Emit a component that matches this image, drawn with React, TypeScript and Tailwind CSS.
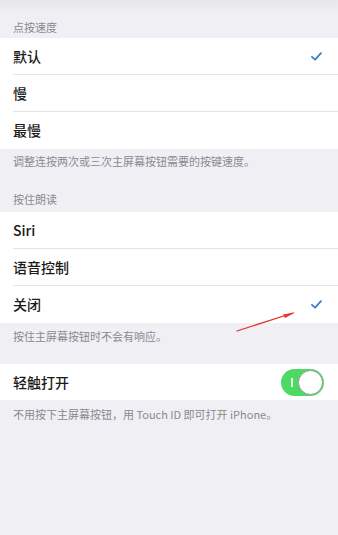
import React from "react";

const font = { fontFamily: '"Noto Sans CJK SC", "Noto Sans", sans-serif' };

function Check() {
  return (
    <svg width="11" height="9" viewBox="0 0 11 9" className="shrink-0">
      <path d="M1 4.8 L4 7.6 L10 1.2" fill="none" stroke="#3b7fc9" strokeWidth="1.8" strokeLinecap="round" strokeLinejoin="round" />
    </svg>
  );
}

function Row({ label, check, last }: { label: string; check?: boolean; last?: boolean }) {
  return (
    <div className="flex h-[37px] items-stretch pl-[13px]">
      <div className={`flex flex-1 items-center justify-between pr-[16px] ${last ? "" : "border-b border-[#e4e4e8]"}`}>
        <span className="text-[14px] font-medium text-[#1a1a1a]">{label}</span>
        {check && <Check />}
      </div>
    </div>
  );
}

export default function App() {
  return (
    <div className="relative h-[535px] w-[338px] overflow-hidden bg-[#efeff4]" style={font}>
      <div className="h-[13px] bg-gradient-to-b from-[#e6e6eb] to-[#efeff4]" />
      <div className="flex h-[25px] items-center px-[13px] pt-[3px] text-[11px] text-[#8a8a8f]">点按速度</div>
      <div className="bg-white">
        <Row label="默认" check />
        <Row label="慢" />
        <Row label="最慢" last />
      </div>
      <div className="flex h-[24px] items-center px-[13px] text-[11px] text-[#8a8a8f]">调整连按两次或三次主屏幕按钮需要的按键速度。</div>
      <div className="flex h-[39px] items-end px-[13px] pb-[5px] text-[11px] text-[#8a8a8f]">按住朗读</div>
      <div className="bg-white">
        <Row label="Siri" />
        <Row label="语音控制" />
        <Row label="关闭" check last />
      </div>
      <div className="flex h-[26px] items-center px-[13px] text-[11px] text-[#8a8a8f]">按住主屏幕按钮时不会有响应。</div>
      <div className="h-[15px]" />
      <div className="flex h-[36px] items-center justify-between bg-white pl-[13px] pr-[14px]">
        <span className="text-[14px] font-medium text-[#1a1a1a]">轻触打开</span>
        <div className="relative h-[27px] w-[43px] rounded-full bg-[#4cd964]">
          <div className="absolute left-[10px] top-[9px] h-[9px] w-[1.5px] bg-white/90" />
          <div className="absolute right-[1px] top-[1px] h-[25px] w-[25px] rounded-full border border-[#9a9a9a] bg-white" />
        </div>
      </div>
      <div className="flex h-[28px] items-center px-[13px] text-[11px] text-[#8a8a8f]">不用按下主屏幕按钮，用 Touch ID 即可打开 iPhone。</div>
      <svg className="absolute left-0 top-0" width="338" height="535" viewBox="0 0 338 535">
        <path d="M237 331 L293 313" stroke="#e8322c" strokeWidth="1.3" strokeLinecap="round" />
        <path d="M283 314.5 L295 312.5 L285 318 Z" fill="#e8322c" />
      </svg>
    </div>
  );
}
